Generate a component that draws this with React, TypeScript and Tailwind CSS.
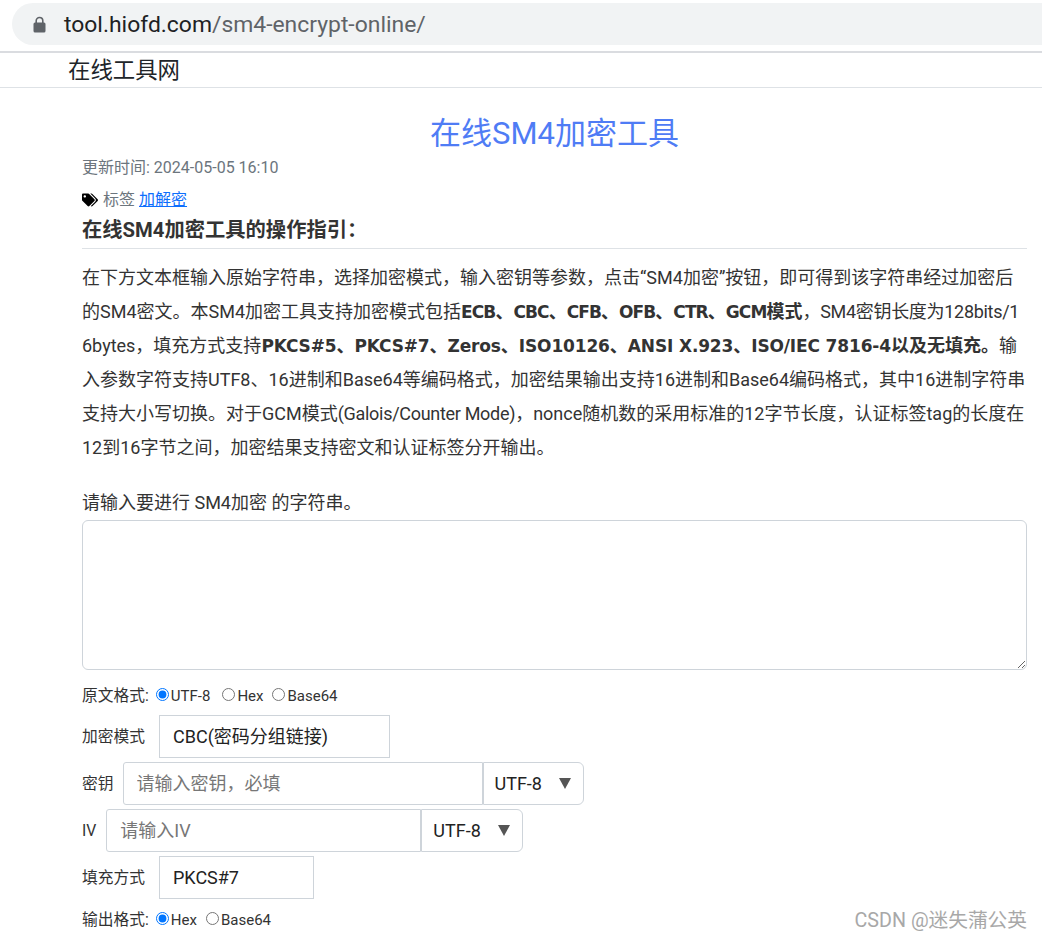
import type { ReactNode } from "react";
import { FaTags } from "react-icons/fa";

const cjk = "font-['Roboto','Noto_Sans_CJK_SC',sans-serif]";

function L({ children }: { children: ReactNode }) {
  return <span className="font-['DejaVu_Sans',sans-serif] text-[17px] leading-[0] tracking-[-0.15px]">{children}</span>;
}

function N({ children }: { children: ReactNode }) {
  return <span className="font-['DejaVu_Sans',sans-serif] text-[17px] leading-[0] tracking-[-0.9px]">{children}</span>;
}

function Radio({ label, checked, name }: { label: string; checked?: boolean; name: string }) {
  return (
    <label className="flex items-center">
      <input type="radio" name={name} defaultChecked={checked} className="m-0 mr-[2px] h-[13px] w-[13px] -translate-y-[2px] accent-[#0075ff]" />
      <span className="text-[15px]">{label}</span>
    </label>
  );
}

function Caret() {
  return (
    <svg width="12" height="11" viewBox="0 0 12 11">
      <path d="M0 0h12L6 11z" fill="#555" />
    </svg>
  );
}

function KeyRow({ label, placeholder, inputW, gap, selectW }: { label: string; placeholder: string; inputW: string; gap: string; selectW: string }) {
  return (
    <div className={`flex h-[43px] items-center ${gap}`}>
      <span className="text-[15.75px] text-[#333]">{label}</span>
      <div className="flex h-[43px]">
        <input
          placeholder={placeholder}
          className={`${inputW} h-full rounded-l-[3px] border border-[#ced4da] bg-white px-[13px] text-[18px] text-[#222] outline-none placeholder:text-[#777]`}
        />
        <div className={`${selectW} flex h-full items-center justify-between rounded-r-[6px] border border-[#ced4da] pl-[11px] pr-[12px] text-[18px] text-[#222]`}>
          <span>UTF-8</span>
          <Caret />
        </div>
      </div>
    </div>
  );
}

function BoxRow({ label, value, w }: { label: string; value: string; w: string }) {
  return (
    <div className="flex h-[43px] items-center gap-[14px]">
      <span className="text-[15.75px] text-[#333]">{label}</span>
      <div className={`${w} flex h-[43px] items-center border border-[#ced4da] pl-[13px] text-[18px] text-[#222]`}>{value}</div>
    </div>
  );
}

export default function App() {
  return (
    <div className={`relative h-[940px] w-[1042px] overflow-hidden bg-white ${cjk}`}>
      <div className="h-[51px] pl-3 pt-[3px]">
        <div className="flex h-[42px] items-center rounded-l-[21px] bg-[#f1f3f4] pl-[21px]">
          <svg width="13" height="17" viewBox="0 0 13 17" className="mr-[18px]">
            <path d="M3.2 7V4.8a3.3 3.3 0 0 1 6.6 0V7" fill="none" stroke="#5f6368" strokeWidth="1.6" />
            <rect x="0.5" y="6.5" width="12" height="10" rx="1.5" fill="#5f6368" />
          </svg>
          <span className="pt-[2px] text-[22.9px] text-[#202124]">
            tool.hiofd.com<span className="text-[#5f6368]">/sm4-encrypt-online/</span>
          </span>
        </div>
      </div>
      <div className="h-[2px] bg-[#dadce0]" />
      <header className="flex h-[35px] items-center border-b border-[#dee2e6] pl-[68px] pt-[2px] text-[22.4px] text-[#212529]">在线工具网</header>

      <main className="ml-[82px] w-[945px]">
        <h1 className="mt-[21px] h-[46px] pt-[2px] text-center text-[31px] leading-[46px] text-[#4f7cf5]">在线SM4加密工具</h1>
        <p className="h-[24px] text-[16px] leading-[26px] text-[#6c757d]">更新时间: 2024-05-05 16:10</p>
        <div className="mt-2 flex h-[24px] items-center pt-[2px] text-[16px] text-[#6c757d]">
          <FaTags size={16} color="#000" className="mr-[5px]" />
          <span>标签</span>
          <a href="#" className="ml-1 text-[#0d6efd] underline">加解密</a>
        </div>
        <h2 className="h-[38px] border-b border-[#dee2e6] text-[20.3px] font-bold leading-[39px] text-[#333]">在线SM4加密工具的操作指引：</h2>
        <div className="mt-[12px] whitespace-nowrap text-[18px] leading-[34px] text-[#333]">
          在下方文本框输入原始字符串，选择加密模式，输入密钥等参数，点击“SM4加密”按钮，即可得到该字符串经过加密后
          <br />
          的SM4密文。本SM4加密工具支持加密模式包括
          <b><N>ECB</N>、<N>CBC</N>、<N>CFB</N>、<N>OFB</N>、<N>CTR</N>、<N>GCM</N>模式</b><span className="tracking-[-0.3px]">，SM4密钥长度为128bits/1</span>
          <br />
          6bytes，填充方式支持
          <b><L>PKCS#5</L>、<L>PKCS#7</L>、<L>Zeros</L>、<L>ISO10126</L>、<L>ANSI X.923</L>、<L>ISO/IEC 7816-4</L>以及无填充。</b>输
          <br />
          入参数字符支持UTF8、16进制和Base64等编码格式，加密结果输出支持16进制和Base64编码格式，其中16进制字符串
          <br />
          支持大小写切换。对于GCM模式<span className="tracking-[-0.3px]">(Galois/Counter Mode)</span>，nonce随机数的采用标准的12字节长度，认证标签tag的长度在
          <br />
          12到16字节之间，加密结果支持密文和认证标签分开输出。
        </div>
        <p className="mt-[26px] h-[24px] text-[18px] leading-[24px] text-[#333]">请输入要进行 SM4加密 的字符串。</p>
        <textarea className="mt-[5px] block h-[150px] w-[945px] rounded-[6px] border border-[#ced4da] outline-none" />

        <div className="mt-[14px] flex h-[24px] items-center gap-[9px] text-[15.75px] text-[#333]">
          <div className="mr-[3px] flex items-center gap-[7px]">
            <span>原文格式:</span>
            <Radio name="a" label="UTF-8" checked />
          </div>
          <Radio name="a" label="Hex" />
          <Radio name="a" label="Base64" />
        </div>
        <div className="mt-[7px] flex flex-col gap-[4px]">
          <BoxRow label="加密模式" value="CBC(密码分组链接)" w="w-[231px]" />
          <KeyRow label="密钥" placeholder="请输入密钥，必填" inputW="w-[360px]" gap="gap-[9px]" selectW="w-[101px]" />
          <KeyRow label="IV" placeholder="请输入IV" inputW="w-[315px]" gap="gap-[10px]" selectW="w-[102px]" />
          <BoxRow label="填充方式" value="PKCS#7" w="w-[155px]" />
        </div>
        <div className="mt-[9px] flex h-[24px] items-center gap-[9px] text-[15.75px] text-[#333]">
          <div className="flex items-center gap-[7px]">
            <span>输出格式:</span>
            <Radio name="b" label="Hex" checked />
          </div>
          <Radio name="b" label="Base64" />
        </div>
      </main>

      <div className="absolute bottom-[6px] right-[15px] text-[19.7px] leading-[26px] text-[#a8a8a8]">CSDN @迷失蒲公英</div>
    </div>
  );
}
